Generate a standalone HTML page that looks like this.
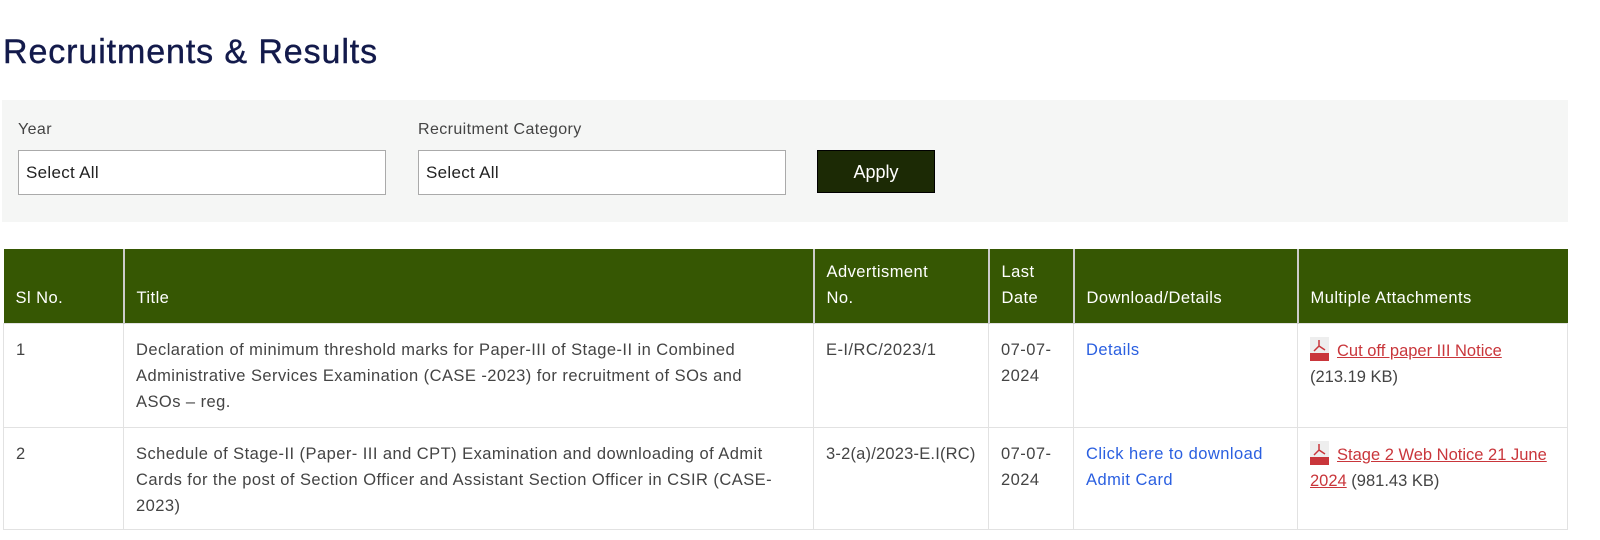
<!DOCTYPE html>
<html><head><style>
body{margin:0;width:1600px;height:540px;overflow:hidden;background:#fff;font-family:"Liberation Sans",sans-serif;}
h1{position:absolute;left:3px;top:33px;margin:0;font-size:34px;font-weight:normal;color:#131a4b;letter-spacing:0.9px;-webkit-text-stroke:0.4px #131a4b;}
.filter{position:absolute;left:2px;top:100px;width:1566px;height:122px;background:#f5f6f5;}
.lbl{position:absolute;top:121px;font-size:16px;color:#444;letter-spacing:0.4px}
.inp{position:absolute;top:150px;width:368px;height:45px;border:1px solid #aaa;background:#fff;box-sizing:border-box;font-size:17px;color:#222;padding:12px 7px;letter-spacing:0.3px}
.btn{position:absolute;left:817px;top:150px;width:118px;height:43px;background:#1c2a05;color:#fff;font-size:18px;text-align:center;line-height:43px;border:1px solid #000;box-sizing:border-box;}
table{position:absolute;left:3px;top:249px;border-collapse:collapse;width:1565px;font-size:16.5px;table-layout:fixed;letter-spacing:0.45px}
th{background:#365703;color:#fff;font-weight:normal;text-align:left;vertical-align:bottom;padding:0 12px 12px;border-left:2px solid #ccc;height:62px;line-height:26px;}
th:first-child{border-left:none}
td{vertical-align:top;padding:13px 12px 10px;border:1px solid #e2e2e2;color:#444;line-height:26px;}
tr.r1 td{height:80px}
a.b{color:#2a5fe0;text-decoration:none}
a.r{color:#c9363b;text-decoration:underline}
.pdf{display:inline-block;width:19px;height:24px;vertical-align:-5px;margin-right:8px;}
.att{letter-spacing:0;padding-right:6px}
</style></head><body>
<h1>Recruitments &amp; Results</h1>
<div class="filter"></div>
<div class="lbl" style="left:18px">Year</div>
<div class="lbl" style="left:418px">Recruitment Category</div>
<div class="inp" style="left:18px">Select All</div>
<div class="inp" style="left:418px">Select All</div>
<div class="btn">Apply</div>
<table>
<colgroup><col style="width:120px"><col style="width:690px"><col style="width:175px"><col style="width:85px"><col style="width:224px"><col></colgroup>
<tr><th>Sl No.</th><th>Title</th><th>Advertisment<br>No.</th><th>Last<br>Date</th><th>Download/Details</th><th>Multiple Attachments</th></tr>
<tr class="r1"><td>1</td><td>Declaration of minimum threshold marks for Paper-III of Stage-II in Combined<br>Administrative Services Examination (CASE -2023) for recruitment of SOs and<br>ASOs – reg.</td><td>E-I/RC/2023/1</td><td>07-07-<br>2024</td><td><a class="b">Details</a></td><td class="att"><svg class="pdf" viewBox="0 0 19 24"><rect x="0" y="0" width="19" height="24" fill="#eee"/><rect x="0" y="16" width="19" height="8" fill="#c9363b"/><path d="M9 3 L9 9 M9 9 L4 14 M9 9 L15 13" stroke="#c9363b" stroke-width="1.5" fill="none"/></svg><a class="r">Cut off paper III Notice</a><br>(213.19 KB)</td></tr>
<tr><td>2</td><td>Schedule of Stage-II (Paper- III and CPT) Examination and downloading of Admit<br>Cards for the post of Section Officer and Assistant Section Officer in CSIR (CASE-<br>2023)</td><td style="white-space:nowrap;letter-spacing:0.2px">3-2(a)/2023-E.I(RC)</td><td>07-07-<br>2024</td><td><a class="b">Click here to download Admit Card</a></td><td class="att"><svg class="pdf" viewBox="0 0 19 24"><rect x="0" y="0" width="19" height="24" fill="#eee"/><rect x="0" y="16" width="19" height="8" fill="#c9363b"/><path d="M9 3 L9 9 M9 9 L4 14 M9 9 L15 13" stroke="#c9363b" stroke-width="1.5" fill="none"/></svg><a class="r">Stage 2 Web Notice 21 June<br>2024</a> (981.43 KB)</td></tr>
</table>
</body></html>
